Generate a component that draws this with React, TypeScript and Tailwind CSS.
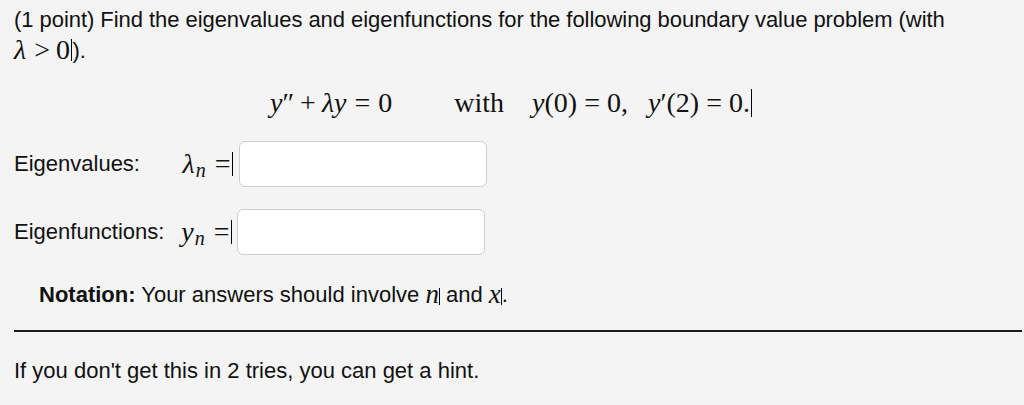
import React from "react";

const serif = { fontFamily: '"Liberation Serif", "Times New Roman", serif' };

function Bar({ h, cls = "" }: { h: string; cls?: string }) {
  return <span className={`inline-block w-[1.5px] bg-black ${h} ${cls}`} />;
}

function Rel({ children }: { children: React.ReactNode }) {
  return <span className="mx-[7px]">{children}</span>;
}

export default function App() {
  return (
    <div
      className="w-[1024px] h-[405px] bg-[#f4f4f4] text-[#111] overflow-hidden"
      style={{ fontFamily: '"Liberation Sans", Arial, sans-serif' }}
    >
      <div className="pl-[14px] pt-[5px] text-[22px]">
        <div className="h-[30px] leading-[30px] tracking-[-0.05px]">
          (1 point) Find the eigenvalues and eigenfunctions for the following boundary value problem (with
        </div>
        <div className="h-[30px] flex items-center text-[28px]" style={serif}>
          <i>λ</i>
          <span className="mx-[8px]">&gt;</span>
          <span className="-ml-[2px]">0</span>
          <Bar h="h-[22px]" cls="ml-[1px]" />
          <span className="text-[22px]" style={{ fontFamily: '"Liberation Sans", Arial, sans-serif' }}>).</span>
        </div>
      </div>

      <div className="mt-[23px] h-[30px] flex items-center pl-[270px] text-[28px]" style={serif}>
        <span className="flex items-center">
          <i>y</i>″<span className="mx-[6px]">+</span><i>λ</i><i>y</i>
          <span className="mx-[8px]">=</span>0
        </span>
        <span className="ml-[62px]">with</span>
        <span className="ml-[28px] flex items-center">
          <i>y</i>(0)<Rel>=</Rel>0,
        </span>
        <span className="ml-[20px] flex items-center">
          <i>y</i>′(2)<Rel>=</Rel>0.
        </span>
        <Bar h="h-[28px]" cls="ml-[1px]" />
      </div>

      <div className="pl-[14px] text-[22px]">
        <div className="mt-[23px] h-[45px] flex items-center">
          <div className="w-[219px] flex items-center justify-between">
            <span>Eigenvalues:</span>
            <span className="flex items-center text-[28px]" style={serif}>
              <i>λ</i>
              <i className="text-[20px] mt-[13px] ml-[1px]">n</i>
              <span className="ml-[9px]">=</span>
              <Bar h="h-[24px]" cls="ml-[1px]" />
            </span>
          </div>
          <div className="ml-[6px] w-[248px] h-[46px] bg-white border border-[#cdcdcd] rounded-[6px]" />
        </div>
        <div className="mt-[23px] h-[45px] flex items-center">
          <div className="w-[218px] flex items-center justify-between">
            <span>Eigenfunctions:</span>
            <span className="flex items-center text-[28px]" style={serif}>
              <i>y</i>
              <i className="text-[20px] mt-[13px] ml-[1px]">n</i>
              <span className="ml-[9px]">=</span>
              <Bar h="h-[24px]" cls="ml-[1px]" />
            </span>
          </div>
          <div className="ml-[5px] w-[248px] h-[46px] bg-white border border-[#cdcdcd] rounded-[6px]" />
        </div>
      </div>

      <div className="pl-[39px] mt-[25px] h-[30px] flex items-center text-[22px] whitespace-pre">
        <b>Notation:</b>
        <span> Your answers should involve </span>
        <i className="text-[27px]" style={serif}>n</i>
        <Bar h="h-[17px]" cls="w-[1px] mt-[4px]" />
        <span> and </span>
        <i className="text-[27px]" style={serif}>x</i>
        <Bar h="h-[17px]" cls="w-[1px] mt-[4px]" />
        <span>.</span>
      </div>

      <div className="ml-[14px] mr-[2px] mt-[21px] h-[2px] bg-[#1a1a1a]" />

      <div className="pl-[14px] mt-[24px] h-[30px] leading-[30px] text-[22px]">
        If you don't get this in 2 tries, you can get a hint.
      </div>
    </div>
  );
}
